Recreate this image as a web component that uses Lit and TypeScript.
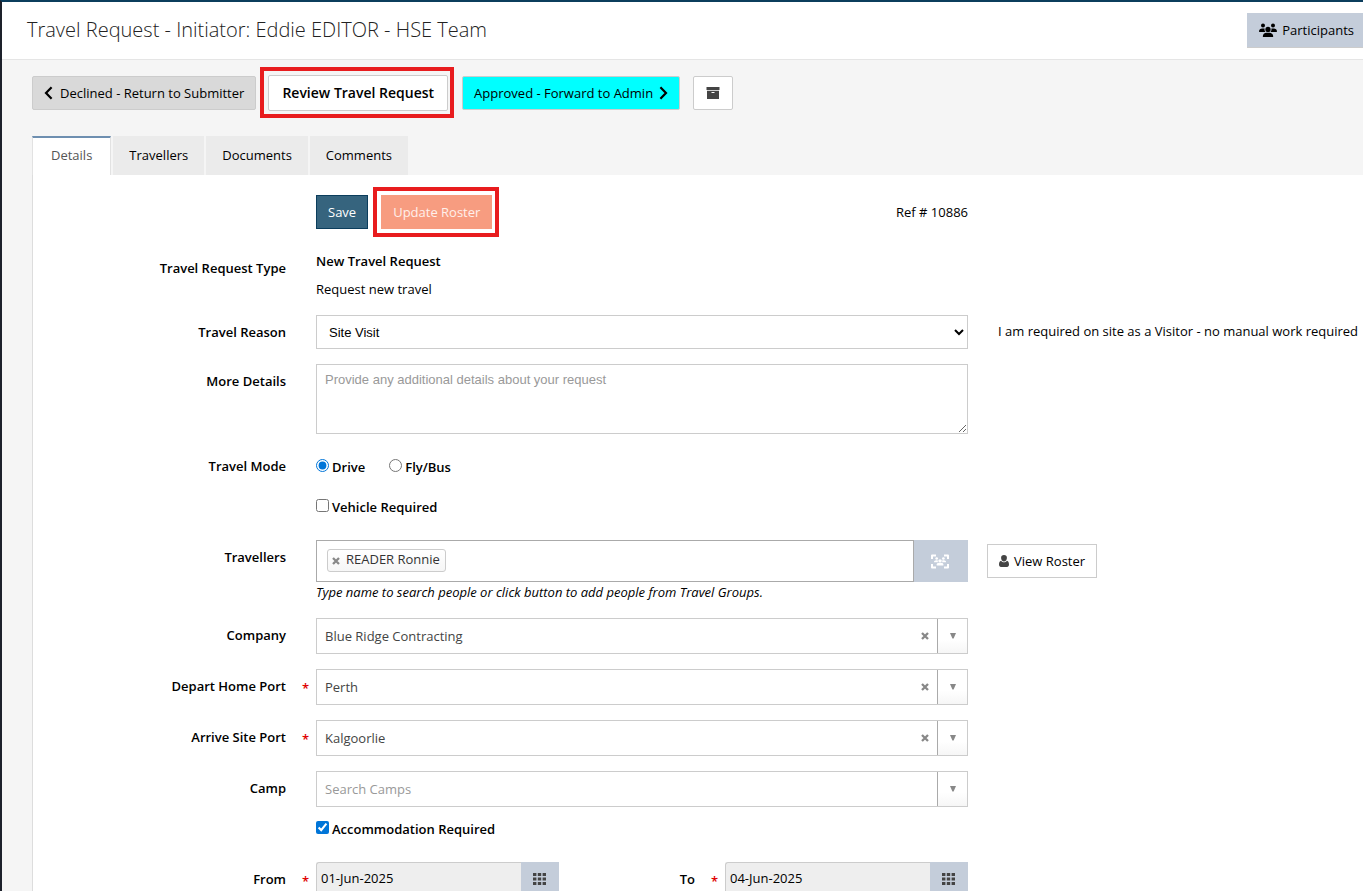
import { LitElement, html, css, svg, nothing } from "lit";
import { customElement, property, state } from "lit/decorators.js";
import { classMap } from "lit/directives/class-map.js";

const base = css`
  *,
  *::before,
  *::after {
    box-sizing: border-box;
  }
  button,
  input {
    font: inherit;
    color: inherit;
    margin: 0;
  }
  button {
    cursor: pointer;
  }
  svg {
    display: block;
    flex: none;
    fill: currentColor;
  }
`;

const peopleShape = svg`
  <circle cx="4" cy="2.6" r="2" />
  <circle cx="14" cy="2.6" r="2" />
  <path d="M0 8.6C0 6.6 1.4 5.4 3.2 5.4h1.4c.4 0 .7.1 1 .2C5.3 7 5.700 8.100 6.500 8.900H.5C.2 8.900 0 8.800 0 8.600z" />
  <path d="M18 8.600c0-2-1.400-3.200-3.200-3.200h-1.400c-.4 0-.7.1-1 .2.3 1.400-.1 2.500-.9 3.300h6c.3 0 .5-.1.5-.3z" />
  <circle cx="9" cy="6.400" r="2.600" />
  <path d="M3.800 13.400c0-2.200 1.600-3.700 3.700-3.700h3c2.100 0 3.700 1.500 3.700 3.700 0 .4-.3.6-.7.6h-9c-.4 0-.7-.2-.7-.6z" />
`;

const icons = {
  people: html`<svg width="18" height="15" viewBox="0 0 18 15" aria-hidden="true">${peopleShape}</svg>`,
  group: html`<svg width="18" height="15" viewBox="0 0 18 15" aria-hidden="true">
    <path d="M0 5V1.500Q0 .5 1 .5h4v2H2V5zM18 5V1.500q0-1-1-1h-4v2h3V5zM0 10v3.500q0 1 1 1h4v-2H2V10zM18 10v3.500q0 1-1 1h-4v-2h3V10z" />
    <g transform="translate(3 3) scale(.67 .6)">${peopleShape}</g>
  </svg>`,
  left: html`<svg width="9" height="14" viewBox="0 0 9 14" aria-hidden="true">
    <path d="M7.600 1.200 2 7l5.600 5.800" fill="none" stroke="currentColor" stroke-width="2.200" />
  </svg>`,
  right: html`<svg width="9" height="14" viewBox="0 0 9 14" aria-hidden="true">
    <path d="M1.400 1.200 7 7l-5.600 5.800" fill="none" stroke="currentColor" stroke-width="2.200" />
  </svg>`,
  archive: html`<svg width="14" height="12" viewBox="0 0 14 12" aria-hidden="true">
    <path d="M.5 0h13v3H.5zM1 3.800h12V12H1zM5.500 5v1h3V5z" fill-rule="evenodd" />
  </svg>`,
  user: html`<svg width="10" height="12" viewBox="0 0 10 12" aria-hidden="true">
    <path d="M5 0a2.900 2.900 0 0 1 2.900 3C7.900 4.900 6.700 6.400 5 6.400S2.100 4.900 2.100 3A2.900 2.900 0 0 1 5 0zM2.100 5.700C2.900 6.700 3.900 7.200 5 7.200s2.100-.5 2.900-1.500C9.400 6 10 7.500 10 9.500 10 11 9.200 12 8 12H2c-1.200 0-2-1-2-2.500C0 7.500.6 6 2.100 5.700z" />
  </svg>`,
  cross: html`<svg width="8" height="8" viewBox="0 0 8 8" aria-hidden="true">
    <path d="M1 1l6 6M7 1 1 7" fill="none" stroke="currentColor" stroke-width="2.300" />
  </svg>`,
  down: html`<svg width="6" height="6" viewBox="0 0 6 6" aria-hidden="true"><path d="M0 0h6L3.600 5.500H2.400z" /></svg>`,
  grid: html`<svg width="13" height="12" viewBox="0 0 13 12" aria-hidden="true">
    <path d="M0 0h3.400v3H0zM4.800 0h3.400v3H4.800zM9.600 0H13v3H9.600zM0 4.500h3.400v3H0zM4.800 4.500h3.400v3H4.800zM9.600 4.500H13v3H9.600zM0 9h3.400v3H0zM4.800 9h3.400v3H4.800zM9.600 9H13v3H9.600z" />
  </svg>`,
};

@customElement("search-select")
class SearchSelect extends LitElement {
  @property() label = "";
  @property() value = "";
  @property() placeholder = "";

  static styles = [
    base,
    css`
      :host {
        display: flex;
        height: 36px;
        border: 1px solid #ccc;
        background: #fff;
      }
      .text {
        flex: 1;
        min-width: 0;
        border: 0;
        padding: 0 8px;
        background: none;
        color: #444;
        outline: 0;
      }
      .text::placeholder {
        color: #999;
      }
      button {
        display: grid;
        place-items: center;
        border: 0;
        padding: 0;
        background: none;
        color: #888;
      }
      .clear {
        width: 24px;
      }
      .open {
        width: 30px;
        border-left: 1px solid #aaa;
        background: linear-gradient(#fff 60%, #f6f6f6);
      }
    `,
  ];

  render() {
    return html`
      <input
        class="text"
        aria-label=${this.label}
        .value=${this.value}
        placeholder=${this.placeholder}
        @input=${(e: Event) => (this.value = (e.target as HTMLInputElement).value)}
      />
      ${this.value
        ? html`<button class="clear" aria-label="Clear ${this.label}" @click=${() => (this.value = "")}>${icons.cross}</button>`
        : nothing}
      <button class="open" aria-label="Open ${this.label}">${icons.down}</button>
    `;
  }
}

@customElement("date-field")
class DateField extends LitElement {
  @property() label = "";
  @property() value = "";

  static styles = [
    base,
    css`
      :host {
        display: flex;
        height: 34px;
      }
      input {
        flex: 1;
        min-width: 0;
        padding: 0 4px 2px;
        border: 1px solid #ccc;
        border-right: 0;
        border-radius: 3px 0 0 3px;
        background: #eee;
        outline: 0;
      }
      button {
        display: grid;
        place-items: center;
        width: 38px;
        border: 0;
        padding: 0 2px 0 0;
        background: #c4cdda;
        color: #444;
      }
    `,
  ];

  render() {
    return html`
      <input aria-label=${this.label} readonly .value=${this.value} />
      <button aria-label="Pick ${this.label} date">${icons.grid}</button>
    `;
  }
}

const tabs = ["Details", "Travellers", "Documents", "Comments"];

@customElement("app-root")
class AppRoot extends LitElement {
  @state() private tab = "Details";

  static styles = [
    base,
    css`
      :host {
        display: flex;
        flex-direction: column;
        height: 100vh;
        overflow: hidden;
        border-top: 2px solid #0b3d5c;
        border-left: 2px solid #1d212b;
        box-sizing: border-box;
        background: #f5f5f5;
        color: #000;
        font: 13px/20px "Open Sans", sans-serif;
      }
      header {
        display: flex;
        flex: none;
        align-items: center;
        justify-content: space-between;
        height: 58px;
        padding-left: 25px;
        border-bottom: 1px solid #e5e5e5;
        background: #fff;
      }
      h1 {
        margin: 0;
        padding-bottom: 2px;
        font-size: 20px;
        line-height: 30px;
        font-weight: 300;
        color: #222;
      }
      .btn {
        display: inline-flex;
        align-items: center;
        justify-content: center;
        gap: 6px;
        height: 34px;
        padding: 0 11px;
        border: 1px solid #ccc;
        border-radius: 2px;
        background: #fff;
        white-space: nowrap;
      }
      .participants {
        gap: 5px;
        height: 35px;
        padding: 0 9px 0 12px;
        border-width: 0 0 1px;
        border-radius: 0;
        background: #c4cdda;
      }
      .toolbar {
        display: flex;
        flex: none;
        align-items: center;
        padding: 7px 30px 0;
      }
      .declined {
        gap: 7px;
        background: #d9d9d9;
        margin-right: 4px;
      }
      .approved {
        margin: 0 13px 0 8px;
        background: #0ff;
      }
      .archive {
        width: 40px;
        color: #444;
      }
      .marked {
        display: flex;
        border: 4px solid #e81c1e;
        padding: 4px 3px 4px 4px;
      }
      .review {
        height: 36px;
        padding: 0 13px;
        font-size: 14px;
        font-weight: 600;
      }
      .toolbar .marked {
        padding: 4px 2px 3px 4px;
      }
      .tabs {
        display: flex;
        flex: none;
        gap: 2px;
        padding: 18px 30px 0;
      }
      .tab {
        height: 39px;
        border: 0;
        padding: 0 16px 2px;
        background: #ebebeb;
      }
      .tab.active {
        padding: 0 18px 4px;
        border: 1px solid #e2e2e2;
        border-top: 2px solid #6e8fb0;
        border-bottom: 0;
        background: #fff;
        color: #555;
      }
      .panel {
        display: flex;
        flex: 1;
        flex-direction: column;
        gap: 15px;
        margin-left: 30px;
        padding-top: 12px;
        border-left: 1px solid #ddd;
        background: #fff;
      }
      .row {
        display: grid;
        flex: none;
        grid-template-columns: minmax(0, 268fr) minmax(0, 682fr) minmax(0, 380fr);
      }
      .label {
        display: flex;
        justify-content: flex-end;
        padding: 7px 0 7px 15px;
        font-weight: 600;
        white-space: nowrap;
      }
      .row > .label {
        margin-right: -15px;
      }
      .mark {
        width: 30px;
        padding: 2px 0 0 16px;
        line-height: 20px;
        color: #e00000;
      }
      .field {
        display: flex;
        flex-direction: column;
        padding: 0 15px;
      }
      .side {
        padding: 6px 0 0 15px;
        white-space: nowrap;
      }
      .side.action {
        padding: 4px;
      }
      .actions {
        flex-direction: row;
        align-items: center;
        margin-bottom: -1px;
      }
      .save {
        margin-right: 5px;
        border-color: #0b3d5c;
        border-radius: 0;
        background: #36647e;
        color: #fff;
      }
      .update {
        border-color: #f79c80;
        border-radius: 0;
        background: #f79c80;
        color: #fff0eb;
      }
      .ref {
        margin-left: auto;
      }
      .type {
        gap: 8px;
        padding-bottom: 1px;
      }
      strong {
        font-weight: 600;
      }
      select,
      textarea {
        width: 100%;
        margin: 0;
        border: 1px solid #ccc;
        border-radius: 0;
        background: #fff;
        color: #000;
        font: 13px/20px "Liberation Sans", Arial, sans-serif;
        outline: 0;
      }
      select {
        height: 34px;
        padding: 0 0 0 8px;
      }
      textarea {
        display: block;
        height: 70px;
        padding: 5px 8px;
        resize: vertical;
      }
      textarea::placeholder {
        color: #999;
      }
      .choices {
        display: flex;
        gap: 24px;
      }
      .choice {
        display: inline-flex;
        align-items: center;
        gap: 3px;
        height: 36px;
        font-weight: 600;
      }
      .choice input {
        width: 13px;
        height: 13px;
        margin-bottom: 3px;
        accent-color: #0075d8;
      }
      .stack {
        gap: 4px;
      }
      .people {
        display: flex;
        height: 42px;
      }
      .tokens {
        display: flex;
        flex: 1;
        min-width: 0;
        align-items: flex-start;
        gap: 8px;
        padding: 8px 10px;
        border: 1px solid #aaa;
      }
      .token {
        display: flex;
        align-items: center;
        gap: 6px;
        height: 23px;
        padding: 0 5px 3px 4px;
        border: 1px solid #ccc;
        border-radius: 3px;
        background: linear-gradient(#fff, #f6f6f6);
        color: #333;
        white-space: nowrap;
      }
      .token button {
        padding: 3px 0 0;
        border: 0;
        background: none;
        color: #888;
      }
      .tokens input {
        flex: 1;
        min-width: 0;
        height: 23px;
        border: 0;
        padding: 0;
        outline: 0;
      }
      .add {
        display: grid;
        place-items: center;
        width: 54px;
        border: 0;
        padding: 0 2px 0 0;
        background: #c4cdda;
        color: #fff;
      }
      .hint {
        margin: 0;
        line-height: 21px;
        font-style: italic;
      }
      .roster {
        gap: 5px;
        border-radius: 0;
      }
      .roster svg {
        color: #444;
      }
      .dates {
        display: grid;
        grid-template-columns: minmax(0, 243fr) minmax(0, 166fr) minmax(0, 243fr);
      }
    `,
  ];

  private label(text: string, required = false, target = "") {
    const body = html`<span>${text}</span><span class="mark">${required ? "*" : nothing}</span>`;
    return target ? html`<label class="label" for=${target}>${body}</label>` : html`<div class="label">${body}</div>`;
  }

  private search(label: string, value: string, required = false, placeholder = "") {
    return html`<div class="row">
      ${this.label(label, required)}
      <div class="field">
        <search-select label=${label} value=${value} placeholder=${placeholder}></search-select>
      </div>
    </div>`;
  }

  render() {
    return html`
      <header>
        <h1>Travel Request - Initiator: Eddie EDITOR - HSE Team</h1>
        <button class="btn participants">${icons.people}Participants</button>
      </header>
      <div class="toolbar">
        <button class="btn declined">${icons.left}Declined - Return to Submitter</button>
        <span class="marked"><button class="btn review">Review Travel Request</button></span>
        <button class="btn approved">Approved - Forward to Admin${icons.right}</button>
        <button class="btn archive" aria-label="Archive">${icons.archive}</button>
      </div>
      <nav class="tabs" role="tablist">
        ${tabs.map(
          (name) => html`<button
            role="tab"
            aria-selected=${name === this.tab ? "true" : "false"}
            class=${classMap({ tab: true, active: name === this.tab })}
            @click=${() => (this.tab = name)}
          >${name}</button>`
        )}
      </nav>
      <main class="panel">
        <div class="row">
          <span></span>
          <div class="field actions">
            <button class="btn save">Save</button>
            <span class="marked"><button class="btn update">Update Roster</button></span>
            <span class="ref">Ref # 10886</span>
          </div>
        </div>
        <div class="row">
          ${this.label("Travel Request Type")}
          <div class="field type"><strong>New Travel Request</strong><span>Request new travel</span></div>
        </div>
        <div class="row">
          ${this.label("Travel Reason", false, "reason")}
          <div class="field">
            <select id="reason"><option>Site Visit</option></select>
          </div>
          <div class="side">I am required on site as a Visitor - no manual work required</div>
        </div>
        <div class="row">
          ${this.label("More Details", false, "details")}
          <div class="field">
            <textarea id="details" placeholder="Provide any additional details about your request"></textarea>
          </div>
        </div>
        <div class="row">
          ${this.label("Travel Mode")}
          <div class="field stack">
            <div class="choices">
              <label class="choice"><input type="radio" name="mode" checked />Drive</label>
              <label class="choice"><input type="radio" name="mode" />Fly/Bus</label>
            </div>
            <label class="choice"><input type="checkbox" />Vehicle Required</label>
          </div>
        </div>
        <div class="row">
          ${this.label("Travellers", false, "travellers")}
          <div class="field">
            <div class="people">
              <div class="tokens">
                <span class="token"><button aria-label="Remove READER Ronnie">${icons.cross}</button>READER Ronnie</span>
                <input id="travellers" />
              </div>
              <button class="add" aria-label="Add from Travel Groups">${icons.group}</button>
            </div>
            <p class="hint">Type name to search people or click button to add people from Travel Groups.</p>
          </div>
          <div class="side action"><button class="btn roster">${icons.user}View Roster</button></div>
        </div>
        ${this.search("Company", "Blue Ridge Contracting")}
        ${this.search("Depart Home Port", "Perth", true)}
        ${this.search("Arrive Site Port", "Kalgoorlie", true)}
        <div class="row">
          ${this.label("Camp")}
          <div class="field stack">
            <search-select label="Camp" placeholder="Search Camps"></search-select>
            <label class="choice"><input type="checkbox" checked />Accommodation Required</label>
          </div>
        </div>
        <div class="row">
          ${this.label("From", true)}
          <div class="field">
            <div class="dates">
              <date-field label="From" value="01-Jun-2025"></date-field>
              ${this.label("To", true)}
              <date-field label="To" value="04-Jun-2025"></date-field>
            </div>
          </div>
        </div>
      </main>
    `;
  }
}
